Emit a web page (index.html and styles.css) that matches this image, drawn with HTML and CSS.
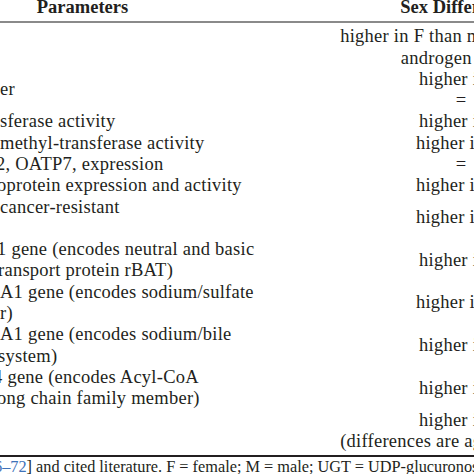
FILE: index.html
```html
<!DOCTYPE html>
<html lang="en">
<head>
<meta charset="utf-8">
<title>Sex differences table</title>
<link rel="stylesheet" href="styles.css">
</head>
<body>
<div class="table">
  <div class="thead">
    <div class="th th-param">Parameters</div>
    <div class="th th-sex">Sex Differences</div>
  </div>
  <div class="tbody">
    <div class="row">
      <div class="c-par"></div>
      <div class="c-sex">higher in F than males; reduced<br>androgen levels</div>
    </div>
    <div class="row">
      <div class="c-par">er</div>
      <div class="c-sex">higher in F<br>=</div>
    </div>
    <div class="row">
      <div class="c-par">sferase activity</div>
      <div class="c-sex">higher in F</div>
    </div>
    <div class="row">
      <div class="c-par">methyl-transferase activity</div>
      <div class="c-sex">higher in M</div>
    </div>
    <div class="row">
      <div class="c-par"><span class="cut-4">2</span>, OATP7, expression</div>
      <div class="c-sex">=</div>
    </div>
    <div class="row">
      <div class="c-par"><span class="cut-3">o</span>protein expression and activity</div>
      <div class="c-sex">higher in M</div>
    </div>
    <div class="row">
      <div class="c-par"> cancer-resistant<br>&nbsp;</div>
      <div class="c-sex">higher in M</div>
    </div>
    <div class="row">
      <div class="c-par"><span class="cut-3">1</span> gene (encodes neutral and basic<br><span class="cut-2">r</span>ansport protein rBAT)</div>
      <div class="c-sex">higher in F</div>
    </div>
    <div class="row">
      <div class="c-par">A1 gene (encodes sodium/sulfate<br>r)</div>
      <div class="c-sex">higher in M</div>
    </div>
    <div class="row">
      <div class="c-par">A1 gene (encodes sodium/bile<br><span class="cut-2">s</span>ystem)</div>
      <div class="c-sex">higher in F</div>
    </div>
    <div class="row">
      <div class="c-par"><span class="cut-7">4</span> gene (encodes Acyl-CoA<br><span class="cut-3">o</span>ng chain family member)</div>
      <div class="c-sex">higher in F</div>
    </div>
    <div class="row">
      <div class="c-par"></div>
      <div class="c-sex">higher in F<br>(differences are age-dependent)</div>
    </div>
  </div>
  <p class="foot"><span class="ref"><span class="cut-6">6</span>–72</span>] and cited literature. F = female; M = male; UGT = UDP-glucuronosyltransferase.</p>
</div>
</body>
</html>
```

FILE: styles.css
```css
html, body {
  margin: 0;
  padding: 0;
  overflow: hidden;
  background: #ffffff;
}

body {
  width: 474px;
  height: 474px;
  font-family: "Liberation Serif", "Times New Roman", serif;
  font-size: 18.5px;
  line-height: 21.2px;
  color: #231f20;
}

.table {
  width: 592px;
}

.thead {
  display: grid;
  grid-template-columns: 330px 262px;
  margin-top: -3px;
  padding-bottom: 3px;
  border-bottom: 2px solid #8a8a8a;
  font-weight: bold;
  white-space: nowrap;
}

.th-param {
  padding-right: 165px;
  text-align: center;
}

.th-sex {
  text-align: center;
}

.tbody {
  padding-top: 3px;
  padding-bottom: 3px;
  border-bottom: 2px solid #231f20;
  line-height: 21.3px;
  letter-spacing: 0.25px;
}

.row {
  display: grid;
  grid-template-columns: 330px 262px;
  align-items: center;
  white-space: nowrap;
}

.c-par {
  text-align: left;
}

.c-sex {
  text-align: center;
}

.cut-2 { margin-left: -2px; }
.cut-3 { margin-left: -3px; }
.cut-4 { margin-left: -4px; }
.cut-6 { margin-left: -6px; }
.cut-7 { margin-left: -7px; }

.foot {
  margin: 0;
  font-size: 16.3px;
  line-height: 19px;
  white-space: nowrap;
}

.ref {
  color: #3f72b8;
}
```
